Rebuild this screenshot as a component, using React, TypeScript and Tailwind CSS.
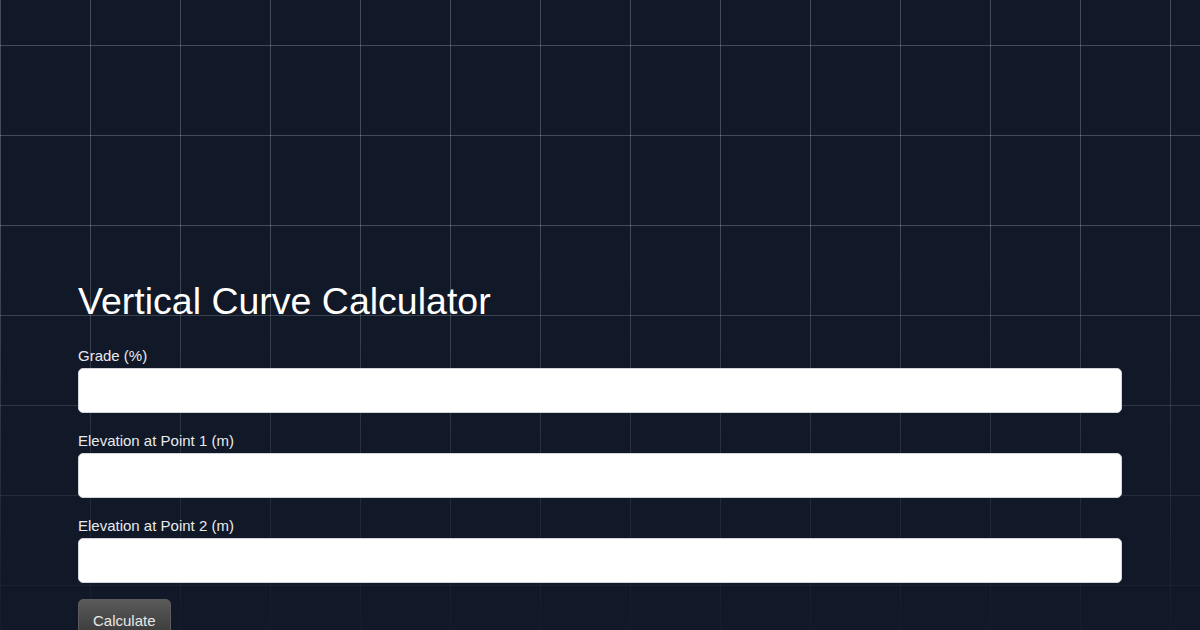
import { useState } from "react";

const FIELDS = [
  { id: "grade", label: "Grade (%)" },
  { id: "elev1", label: "Elevation at Point 1 (m)" },
  { id: "elev2", label: "Elevation at Point 2 (m)" },
];

export default function App() {
  const [values, setValues] = useState<Record<string, string>>({});

  return (
    <div
      className="min-h-[630px] h-[630px] overflow-hidden bg-[#111827] bg-[linear-gradient(to_bottom,rgba(17,24,39,0)_230px,rgba(17,24,39,0.95)_630px),linear-gradient(to_right,rgba(255,255,255,0.22)_1px,transparent_1px),linear-gradient(to_bottom,rgba(255,255,255,0.22)_1px,transparent_1px)] bg-[size:100%_100%,90px_90px,90px_90px] bg-[position:0_0,0_0,0_45px]"
      style={{ fontFamily: "'Liberation Sans', Arial, sans-serif" }}
    >
      <div className="px-[78px] pt-[280px]">
        {/* Title */}
        <h1 className="text-[37.5px] leading-[42px] text-white font-normal mb-[23px]">
          Vertical Curve Calculator
        </h1>

        {/* Inputs */}
        <div className="flex flex-col gap-[17px]">
          {FIELDS.map((f) => (
            <div key={f.id} className="flex flex-col">
              <label htmlFor={f.id} className="pt-[1px] text-[15px] leading-[20px] text-[#e8eaee] mb-[2px]">
                {f.label}
              </label>
              <input
                id={f.id}
                type="number"
                value={values[f.id] ?? ""}
                onChange={(e) => setValues({ ...values, [f.id]: e.target.value })}
                className="h-[45px] w-full rounded-[5px] bg-white border border-[#d1d5db] px-3 text-[15px] text-gray-900 outline-none"
              />
            </div>
          ))}
        </div>

        <button className="mt-[16px] h-[44px] px-[14px] rounded-[5px] border border-[#5b5b5b] bg-[linear-gradient(to_bottom,#5a5a5a,#333333)] text-[15px] text-[#e8e8e8]">
          Calculate
        </button>
      </div>
    </div>
  );
}
